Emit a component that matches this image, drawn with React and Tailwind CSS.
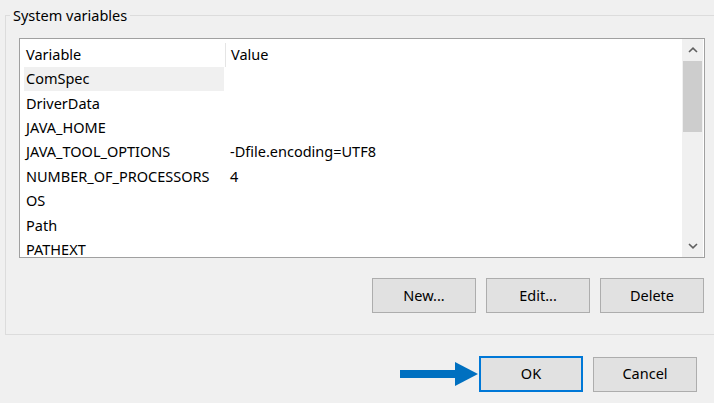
const variables = [
  { name: 'ComSpec', value: '' },
  { name: 'DriverData', value: '' },
  { name: 'JAVA_HOME', value: '' },
  { name: 'JAVA_TOOL_OPTIONS', value: '-Dfile.encoding=UTF8' },
  { name: 'NUMBER_OF_PROCESSORS', value: '4' },
  { name: 'OS', value: '' },
  { name: 'Path', value: '' },
  { name: 'PATHEXT', value: '' },
];

const Chevron = ({ up }) => (
  <svg width="10" height="6" viewBox="0 0 10 6" fill="none">
    <path
      d={up ? 'M1 5L5 1.2L9 5' : 'M1 1L5 4.8L9 1'}
      stroke="#606060"
      strokeWidth="1.6"
    />
  </svg>
);

const DialogButton = ({ children, focused }) => (
  <button
    className={`w-[104px] h-[35px] bg-[#e1e1e1] text-black text-[14.5px] ${
      focused ? 'border-2 border-[#0078d7] h-[36px]' : 'border border-[#adadad]'
    }`}
  >
    {children}
  </button>
);

export default function App() {
  return (
    <div className="w-[714px] h-[403px] bg-[#f0f0f0] overflow-hidden text-black text-[14.5px] font-['Noto_Sans',sans-serif]">
      <div className="pt-[15px] pl-[5px]">
        {/* System variables group box */}
        <div className="relative w-[760px] h-[320px] border border-[#dcdcdc] pl-[13px] pt-[22px]">
          <span className="absolute left-[4px] top-[-11px] bg-[#f0f0f0] px-[3px] leading-[20px]">
            System variables
          </span>

          <div className="w-[686px] h-[220px] border border-[#a0a0a0] bg-white flex overflow-hidden">
            <div className="flex-1">
              <div className="flex h-[28px] items-center pt-[3px]">
                <div className="w-[205px] pl-[6px]">Variable</div>
                <div className="w-px h-[24px] bg-[#e5e5e5]" />
                <div className="pl-[5px]">Value</div>
              </div>
              {variables.map((v, i) => (
                <div key={v.name} className="flex h-[24.4px] items-center">
                  <div className={`ml-[4px] w-[200px] h-full flex items-center pl-[2px] ${i === 0 ? 'bg-[#f0f0f0]' : ''}`}>
                    {v.name}
                  </div>
                  <div className="pl-[6px]">{v.value}</div>
                </div>
              ))}
            </div>

            {/* vertical scrollbar */}
            <div className="w-[21px] mr-px bg-[#f0f0f0] flex flex-col">
              <div className="h-[22px] flex items-center justify-center">
                <Chevron up />
              </div>
              <div className="h-[71px] mx-px bg-[#cdcdcd]" />
              <div className="flex-1" />
              <div className="h-[22px] flex items-center justify-center">
                <Chevron />
              </div>
            </div>
          </div>

          <div className="w-[686px] flex justify-end gap-[10px] mt-[20px] pr-px">
            <DialogButton>New...</DialogButton>
            <DialogButton>Edit...</DialogButton>
            <DialogButton>Delete</DialogButton>
          </div>
        </div>
      </div>

      <div className="flex justify-end items-center gap-[10px] mt-[21px] pr-[17px]">
        <div className="flex items-center gap-px">
          <svg width="78" height="24" viewBox="0 0 78 24">
            <rect x="0" y="8" width="56" height="8" fill="#0070c0" />
            <polygon points="55,0 78,12 55,24" fill="#0070c0" />
          </svg>
          <DialogButton focused>OK</DialogButton>
        </div>
        <DialogButton>Cancel</DialogButton>
      </div>
    </div>
  );
}
